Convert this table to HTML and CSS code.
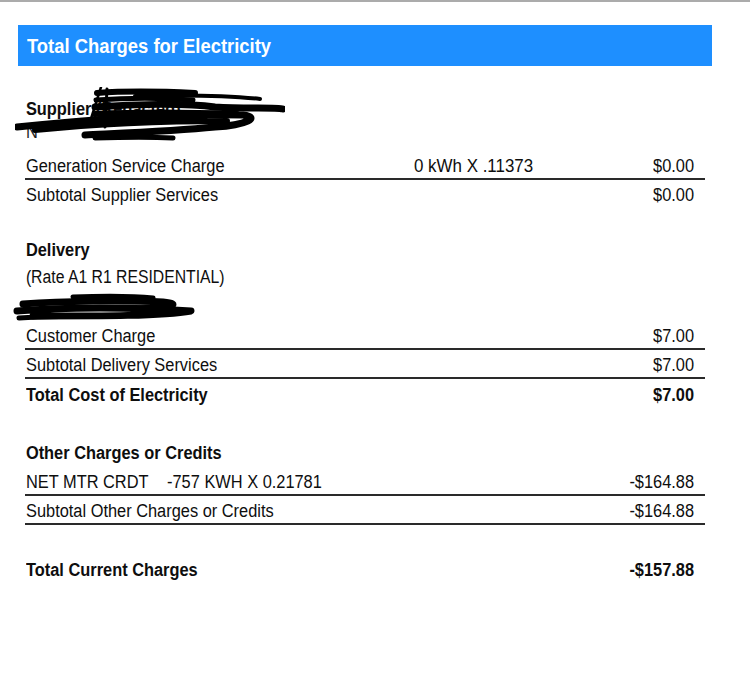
FILE: index.html
```html
<!DOCTYPE html>
<html>
<head>
<meta charset="utf-8">
<link rel="stylesheet" href="styles.css">
</head>
<body>
<div class="page">
  <div class="banner"><span class="banner-text">Total Charges for Electricity</span></div>

  <div class="sheet">
    <div class="section sec-supplier">
      <div class="heading">Supplier (Redacted)</div>
      <div class="redacted">N</div>
      <svg class="scribble scribble-a" width="270" height="60" viewBox="0 0 270 60">
        <g fill="none" stroke="#000" stroke-linecap="round" stroke-linejoin="round">
          <path d="M82 6 C108 4 140 4 180 6" stroke-width="6"/>
          <path d="M81 13 C110 11 150 11 178 13" stroke-width="5"/>
          <path d="M80 20 C120 17 170 16 200 20 C230 22 262 20 268 22" stroke-width="7"/>
          <path d="M120 9 C160 8 210 8 245 12" stroke-width="4"/>
          <path d="M80 27 C120 25 170 25 222 27" stroke-width="6"/>
          <path d="M2 40 C60 34 150 26 228 28 C246 30 232 38 200 40 C160 44 110 46 70 48" stroke-width="7"/>
          <path d="M20 43 C80 37 150 34 212 34" stroke-width="6"/>
          <path d="M40 36 C90 33 140 32 190 32" stroke-width="5"/>
          <path d="M86 0 L74 38" stroke-width="2.5"/>
          <path d="M92 2 L90 40" stroke-width="3"/>
          <path d="M80 51 C110 50 140 50 158 51" stroke-width="5"/>
        </g>
      </svg>
      <div class="row ruled">
        <span class="label">Generation Service Charge</span>
        <span class="mid">0 kWh X .11373</span>
        <span class="amt">$0.00</span>
      </div>
      <div class="row">
        <span class="label">Subtotal Supplier Services</span>
        <span class="mid"></span>
        <span class="amt">$0.00</span>
      </div>
    </div>

    <div class="section sec-delivery">
      <div class="heading">Delivery</div>
      <div class="line">(Rate A1 R1 RESIDENTIAL)</div>
      <div class="redacted"></div>
      <svg class="scribble scribble-b" width="190" height="30" viewBox="0 0 190 30">
        <g fill="none" stroke="#000" stroke-linecap="round" stroke-linejoin="round">
          <path d="M60 5 C90 4 120 4 140 6" stroke-width="5"/>
          <path d="M10 12 C50 9 110 8 150 10 C170 12 160 16 120 17" stroke-width="7"/>
          <path d="M4 19 C50 15 120 15 178 19 C150 24 90 24 20 24" stroke-width="7"/>
          <path d="M6 26 C40 24 70 24 100 24" stroke-width="5"/>
        </g>
      </svg>
      <div class="row ruled">
        <span class="label">Customer Charge</span>
        <span class="mid"></span>
        <span class="amt">$7.00</span>
      </div>
      <div class="row ruled">
        <span class="label">Subtotal Delivery Services</span>
        <span class="mid"></span>
        <span class="amt">$7.00</span>
      </div>
      <div class="row strong">
        <span class="label">Total Cost of Electricity</span>
        <span class="mid"></span>
        <span class="amt">$7.00</span>
      </div>
    </div>

    <div class="section sec-other">
      <div class="heading">Other Charges or Credits</div>
      <div class="row ruled">
        <span class="label"><span class="code">NET MTR CRDT</span>-757 KWH X 0.21781</span>
        <span class="mid"></span>
        <span class="amt">-$164.88</span>
      </div>
      <div class="row ruled">
        <span class="label">Subtotal Other Charges or Credits</span>
        <span class="mid"></span>
        <span class="amt">-$164.88</span>
      </div>
    </div>

    <div class="row strong grand">
      <span class="label">Total Current Charges</span>
      <span class="mid"></span>
      <span class="amt">-$157.88</span>
    </div>
  </div>
</div>
</body>
</html>
```

FILE: styles.css
```css
html, body {
  margin: 0;
  padding: 0;
  background: #ffffff;
}

body {
  font-family: "Liberation Sans", Arial, sans-serif;
  color: #0e0e0e;
  font-size: 18px;
}

.page {
  border-top: 2px solid #ababab;
  width: 750px;
  height: 679px;
  overflow: hidden;
}

.banner {
  margin: 23px 38px 0 18px;
  height: 41px;
  line-height: 42px;
  background: #1e8fff;
  color: #ffffff;
  font-weight: bold;
  font-size: 20px;
  padding-left: 9px;
}

.banner-text {
  display: inline-block;
  transform: scaleX(0.92);
  transform-origin: left center;
}

.sheet {
  margin-left: 25px;
  width: 680px;
}

.section {
  position: relative;
}

.heading,
.line,
.redacted {
  padding-left: 1px;
  transform: scaleX(0.91);
  transform-origin: left center;
}

.heading {
  font-weight: bold;
  line-height: 24px;
  height: 22px;
  padding-top: 2px;
}

.line {
  line-height: 30px;
  height: 28px;
  padding-top: 2px;
  transform: scaleX(0.875);
}

.redacted {
  color: #222;
}

.sec-supplier {
  margin-top: 29px;
}

.sec-supplier .redacted {
  height: 32px;
  line-height: 26px;
}

.sec-delivery {
  margin-top: 29px;
}

.sec-delivery .redacted {
  height: 31px;
}

.sec-other {
  margin-top: 33px;
}

.sec-other .heading {
  margin-bottom: 4px;
}

.scribble {
  position: absolute;
}

.scribble-a {
  left: -10px;
  top: -8px;
}

.scribble-b {
  left: -12px;
  top: 56px;
}

.row {
  display: grid;
  grid-template-columns: 388px 1fr auto;
  height: 27px;
  line-height: 27px;
  padding: 0 11px 0 1px;
}

.row > span {
  display: block;
  white-space: nowrap;
  padding-top: 2px;
  transform: scaleX(0.91);
  transform-origin: left center;
}

.row > .mid {
  transform: scaleX(0.94);
}

.row > .amt {
  text-align: right;
  transform-origin: right center;
}

.row.ruled {
  border-bottom: 2px solid #2a2a2a;
}

.row.strong {
  font-weight: bold;
  line-height: 28px;
}

.row.grand {
  margin-top: 29px;
}

.code {
  display: inline-block;
  width: 155px;
}
```
